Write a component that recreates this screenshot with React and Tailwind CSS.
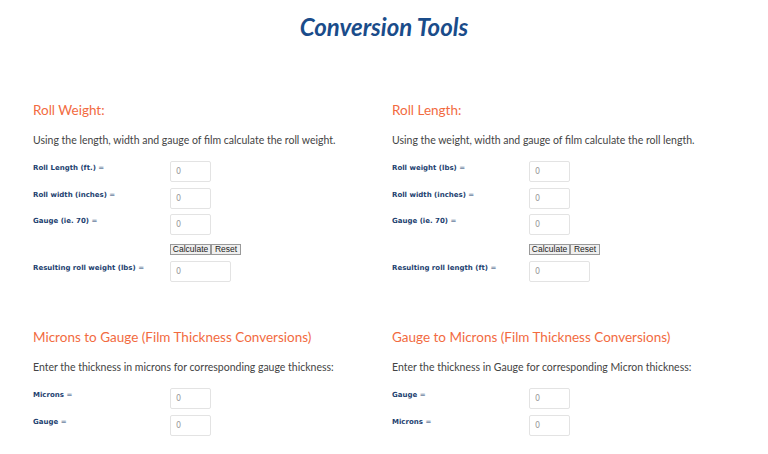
import React from "react";

const lato = { fontFamily: "Lato, 'Open Sans', sans-serif" };

const Field = ({ label, wide }) => (
  <div className="flex items-start h-[21px] mt-[5.5px] first:mt-0">
    <label className="w-[137px] pt-[2px] text-[7px] font-bold text-[#1d3f70] font-['DejaVu_Sans',sans-serif]">
      {label} <span className="text-[#6a7fa0]">=</span>
    </label>
    <input
      type="text"
      defaultValue="0"
      className={`${wide ? "w-[61px]" : "w-[41px]"} h-[21px] border border-[#e3e3e3] rounded-[2px] px-[5px] text-[8px] text-[#999] outline-none font-['DejaVu_Sans',sans-serif]`}
    />
  </div>
);

const Section = ({ title, desc, fields, result }) => (
  <div>
    <h2 className="text-[13.5px] leading-[20px] text-[#f26b3f]" style={lato}>
      {title}
    </h2>
    <p className="mt-[13px] text-[10.5px] leading-[14px] text-[#444]" style={lato}>
      {desc}
    </p>
    <div className="mt-[14px] flex flex-col">
      {fields.map((f) => (
        <Field key={f} label={f} />
      ))}
      {result && (
        <>
          <div className="flex mt-[9px] ml-[137px] h-[11px]">
            <button className="h-[11px] w-[41px] bg-[#efefef] border border-[#999] text-[8.5px] leading-none text-[#222] font-['Liberation_Sans',sans-serif]">
              Calculate
            </button>
            <button className="h-[11px] w-[30px] bg-[#efefef] border border-[#999] text-[8.5px] leading-none text-[#222] font-['Liberation_Sans',sans-serif]">
              Reset
            </button>
          </div>
          <div className="mt-[6px]">
            <Field label={result} wide />
          </div>
        </>
      )}
    </div>
  </div>
);

export default function App() {
  return (
    <div className="w-[768px] h-[454px] bg-white overflow-hidden">
      <div className="h-[54px] flex items-center justify-center">
        <h1 className="text-[24px] font-bold italic text-[#1a4c8a]" style={lato}>
          Conversion Tools
        </h1>
      </div>
      <div className="grid grid-cols-[359px_1fr] pl-[33px] mt-[46px] gap-y-[45px]">
        <Section
          title="Roll Weight:"
          desc="Using the length, width and gauge of film calculate the roll weight."
          fields={["Roll Length (ft.)", "Roll width (inches)", "Gauge (ie. 70)"]}
          result="Resulting roll weight (lbs)"
        />
        <Section
          title="Roll Length:"
          desc="Using the weight, width and gauge of film calculate the roll length."
          fields={["Roll weight (lbs)", "Roll width (inches)", "Gauge (ie. 70)"]}
          result="Resulting roll length (ft)"
        />
        <Section
          title="Microns to Gauge (Film Thickness Conversions)"
          desc="Enter the thickness in microns for corresponding gauge thickness:"
          fields={["Microns", "Gauge"]}
        />
        <Section
          title="Gauge to Microns (Film Thickness Conversions)"
          desc="Enter the thickness in Gauge for corresponding Micron thickness:"
          fields={["Gauge", "Microns"]}
        />
      </div>
    </div>
  );
}
